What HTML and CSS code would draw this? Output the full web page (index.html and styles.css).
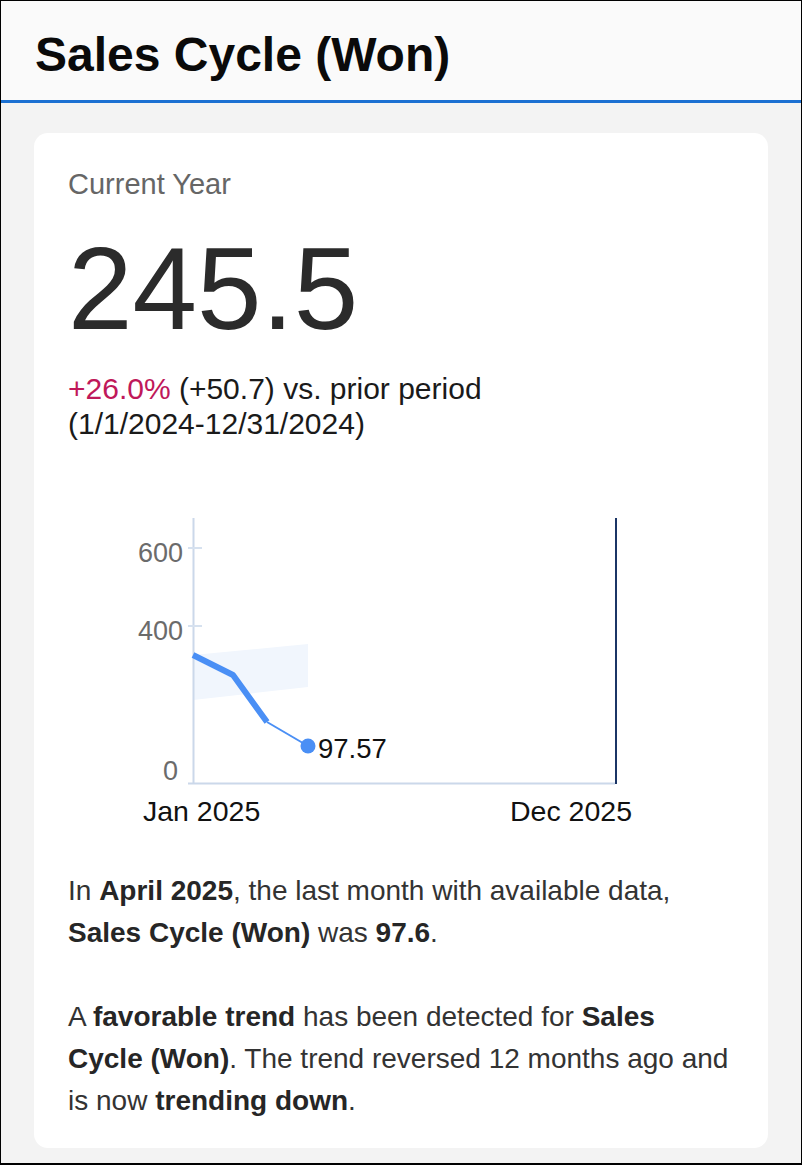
FILE: index.html
```html
<!DOCTYPE html>
<html lang="en">
<head>
<meta charset="utf-8">
<title>Sales Cycle (Won)</title>
<link rel="stylesheet" href="styles.css">
</head>
<body>
<div class="frame">
  <header class="header">
    <h1 class="title">Sales Cycle (Won)</h1>
  </header>
  <main class="card">
    <div class="label">Current Year</div>
    <div class="value">245.5</div>
    <div class="change"><span class="pct">+26.0%</span> (+50.7) vs. prior period (1/1/2024-12/31/2024)</div>
    <svg class="chart" viewBox="0 0 666 330" width="666" height="330" xmlns="http://www.w3.org/2000/svg">
      <polygon points="125,150 240,139 240,182 125,195" fill="#f1f6fd"/>
      <line x1="125.5" y1="13" x2="125.5" y2="279" stroke="#cbd8ea" stroke-width="2"/>
      <line x1="120" y1="278.5" x2="547" y2="278.5" stroke="#cbd8ea" stroke-width="2"/>
      <line x1="120" y1="43" x2="134" y2="43" stroke="#d6e1ef" stroke-width="2"/>
      <line x1="120" y1="121" x2="134" y2="121" stroke="#d6e1ef" stroke-width="2"/>
      <text class="ylab" x="115" y="57" text-anchor="end">600</text>
      <text class="ylab" x="115" y="135" text-anchor="end">400</text>
      <text class="ylab" x="110" y="275" text-anchor="end">0</text>
      <polyline points="125,150 165,170 199,217" fill="none" stroke="#4a8ff5" stroke-width="6" stroke-linejoin="round"/>
      <line x1="199" y1="217" x2="240" y2="241" stroke="#4a8ff5" stroke-width="2"/>
      <circle cx="240" cy="241" r="7.5" fill="#4a8ff5"/>
      <text class="vlab" x="250" y="253">97.57</text>
      <line x1="548" y1="13" x2="548" y2="279" stroke="#1b3566" stroke-width="2"/>
      <text class="xlab" x="75" y="316">Jan 2025</text>
      <text class="xlab" x="564" y="316" text-anchor="end">Dec 2025</text>
    </svg>
    <p class="para">In <b>April 2025</b>, the last month with available data, <b>Sales Cycle (Won)</b> was <b>97.6</b>.</p>
    <p class="para para2">A <b>favorable trend</b> has been detected for <b>Sales Cycle (Won)</b>. The trend reversed 12 months ago and is now <b>trending down</b>.</p>
  </main>
</div>
</body>
</html>
```
FILE: styles.css
```css
html, body {
  margin: 0;
  padding: 0;
}
body {
  font-family: "Liberation Sans", Arial, sans-serif;
  background: #000;
}
.frame {
  box-sizing: border-box;
  width: 802px;
  height: 1165px;
  border-style: solid;
  border-color: #000;
  border-width: 1px 1px 2px 1px;
  background: #f3f3f3;
  overflow: hidden;
}
.header {
  box-sizing: border-box;
  height: 102px;
  background: #fafafa;
  border-bottom: 3px solid #1b70d2;
  padding: 26px 0 0 34px;
}
.title {
  margin: 0;
  font-size: 48px;
  line-height: 56px;
  font-weight: 700;
  color: #0a0a0a;
}
.card {
  display: block;
  margin: 30px 33px 0 33px;
  background: #fff;
  border-radius: 14px;
  padding: 34px 35px 26px 34px;
}
.label {
  font-size: 29px;
  line-height: 34px;
  color: #666;
}
.value {
  margin-top: 30px;
  font-size: 116px;
  line-height: 116px;
  color: #2b2b2b;
}
.change {
  margin-top: 24px;
  font-size: 30px;
  line-height: 35px;
  color: #1a1a1a;
  max-width: 430px;
}
.pct {
  color: #c0185a;
}
.chart {
  display: block;
  margin-top: 64px;
  overflow: visible;
}
.ylab {
  font-family: "Liberation Sans", Arial, sans-serif;
  font-size: 27px;
  fill: #6b6b6b;
}
.vlab {
  font-family: "Liberation Sans", Arial, sans-serif;
  font-size: 27.5px;
  fill: #111;
}
.xlab {
  font-family: "Liberation Sans", Arial, sans-serif;
  font-size: 28.5px;
  fill: #111;
}
.para {
  margin: 35px 0 0 0;
  font-size: 28px;
  line-height: 42px;
  color: #333;
}
.para2 {
  margin-top: 42px;
}
.para b {
  font-weight: 700;
  color: #262626;
}
```
